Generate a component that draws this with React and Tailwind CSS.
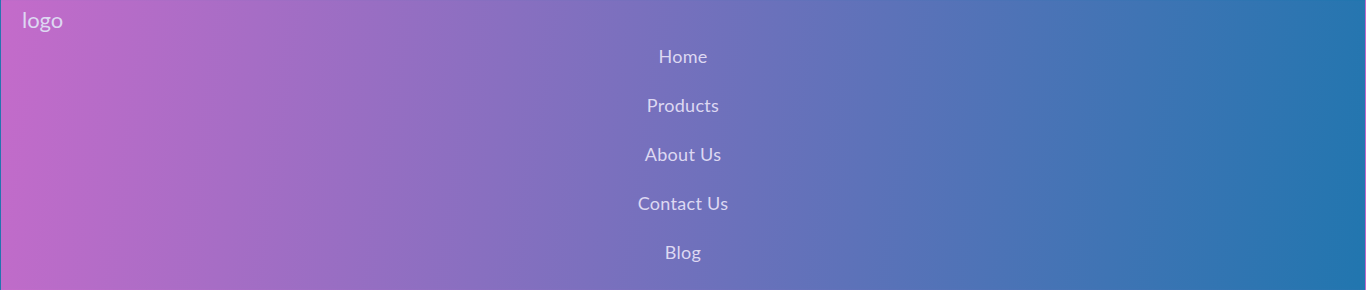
export default function App() {
  const items = ["Home", "Products", "About Us", "Contact Us", "Blog"];
  return (
    <div
      className="h-[290px] w-full border border-transparent bg-linear-[98deg] from-[#c46bca] to-[#2176af] pb-[11px] px-[20px] text-[#ddd8f2]"
      style={{ fontFamily: "Lato, 'Open Sans', sans-serif" }}
    >
      <div className="h-[32px] pl-[1px] pt-[8px] text-[22px] leading-none">logo</div>
      <ul className="flex flex-col items-center">
        {items.map((t) => (
          <li key={t} className="flex h-[49px] items-center justify-center text-[18px] leading-none tracking-[0.3px]">
            <a href="#" className="block pb-[3px]">{t}</a>
          </li>
        ))}
      </ul>
    </div>
  );
}
